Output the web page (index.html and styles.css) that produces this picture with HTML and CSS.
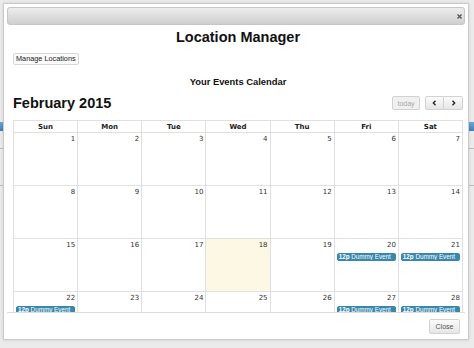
FILE: index.html
```html
<!DOCTYPE html>
<html lang="en">
<head>
  <meta charset="UTF-8" />
  <title>Location Manager</title>
  <link rel="stylesheet" href="styles.css">
</head>
<body>
  <!-- page behind the dialog -->
  <div class="page">
    <div class="page-bar"></div>
    <div class="page-line"></div>
    <div class="page-line second"></div>
  </div>

  <div class="dialog">
    <div class="titlebar">
      <span class="close-x">
        <svg width="5" height="5" viewBox="0 0 5 5"><path d="M0.5 0.5L4.5 4.5M4.5 0.5L0.5 4.5" stroke="#555" stroke-width="1.3"/></svg>
      </span>
    </div>

    <div class="dialog-content">
      <h1>Location Manager</h1>
      <button class="manage-btn">Manage Locations</button>
      <h2>Your Events Calendar</h2>

      <div class="cal-toolbar">
        <div class="cal-title">February 2015</div>
        <div class="cal-buttons">
          <button class="fc-btn today-btn">today</button>
          <div class="btn-group">
            <button class="fc-btn prev">
              <svg width="5" height="6" viewBox="0 0 5 6"><path d="M3.5 0.7L1.3 3L3.5 5.3" fill="none" stroke="#222" stroke-width="1.3"/></svg>
            </button>
            <button class="fc-btn next">
              <svg width="5" height="6" viewBox="0 0 5 6"><path d="M1.5 0.7L3.7 3L1.5 5.3" fill="none" stroke="#222" stroke-width="1.3"/></svg>
            </button>
          </div>
        </div>
      </div>

      <table class="calendar">
        <thead>
          <tr><th>Sun</th><th>Mon</th><th>Tue</th><th>Wed</th><th>Thu</th><th>Fri</th><th>Sat</th></tr>
        </thead>
        <tbody>
          <tr>
            <td><div class="day-num">1</div></td>
            <td><div class="day-num">2</div></td>
            <td><div class="day-num">3</div></td>
            <td><div class="day-num">4</div></td>
            <td><div class="day-num">5</div></td>
            <td><div class="day-num">6</div></td>
            <td><div class="day-num">7</div></td>
          </tr>
          <tr>
            <td><div class="day-num">8</div></td>
            <td><div class="day-num">9</div></td>
            <td><div class="day-num">10</div></td>
            <td><div class="day-num">11</div></td>
            <td><div class="day-num">12</div></td>
            <td><div class="day-num">13</div></td>
            <td><div class="day-num">14</div></td>
          </tr>
          <tr>
            <td><div class="day-num">15</div></td>
            <td><div class="day-num">16</div></td>
            <td><div class="day-num">17</div></td>
            <td class="today"><div class="day-num">18</div></td>
            <td><div class="day-num">19</div></td>
            <td><div class="day-num">20</div><div class="event"><b>12p</b> Dummy Event</div></td>
            <td><div class="day-num">21</div><div class="event"><b>12p</b> Dummy Event</div></td>
          </tr>
          <tr>
            <td><div class="day-num">22</div><div class="event"><b>12p</b> Dummy Event</div></td>
            <td><div class="day-num">23</div></td>
            <td><div class="day-num">24</div></td>
            <td><div class="day-num">25</div></td>
            <td><div class="day-num">26</div></td>
            <td><div class="day-num">27</div><div class="event"><b>12p</b> Dummy Event</div></td>
            <td><div class="day-num">28</div><div class="event"><b>12p</b> Dummy Event</div></td>
          </tr>
        </tbody>
      </table>
    </div>

    <div class="dialog-footer">
      <button class="fc-btn close-btn">Close</button>
    </div>
  </div>
</body>
</html>
```

FILE: styles.css
```css
body {
  margin: 0;
  width: 474px;
  height: 348px;
  overflow: hidden;
  position: relative;
  background: #ebebeb;
  font-family: "Liberation Sans", Arial, sans-serif;
  color: #111;
}

/* page under the overlay */
.page {
  padding-top: 122px;
}
.page-bar {
  height: 9px;
  background: linear-gradient(#6ea8da, #3d80bb);
}
.page-line {
  height: 1px;
  margin-top: 17px;
  background: #bdbdbd;
}
.page-line.second {
  margin-top: 36px;
}

.dialog {
  position: absolute;
  left: 3px;
  top: 3px;
  width: 458px;
  height: 332px;
  padding: 3px 3px 0;
  display: flex;
  flex-direction: column;
  background: #fff;
  border: 1px solid #cacaca;
  box-shadow: 0 0 3px rgba(0, 0, 0, 0.12);
}

.titlebar {
  height: 18px;
  box-sizing: border-box;
  display: flex;
  justify-content: flex-end;
  align-items: center;
  padding-right: 2px;
  border: 1px solid #c6c6c6;
  border-radius: 3px;
  background: linear-gradient(#ededed, #cfcfcf);
}
.close-x {
  display: flex;
  width: 5px;
  height: 5px;
}

.dialog-content {
  height: 287px;
  box-sizing: border-box;
  padding: 0 2px 0 6px;
  overflow: hidden;
}

h1 {
  margin: 4px 0 0;
  font-size: 14.5px;
  line-height: 17px;
  text-align: center;
}

.manage-btn {
  display: block;
  margin-top: 7px;
  height: 12px;
  padding: 0 2px;
  font-family: "Liberation Sans", Arial, sans-serif;
  font-size: 7.3px;
  line-height: 10px;
  color: #222;
  background: #fafafa;
  border: 1px solid #d8d8d8;
  border-radius: 2px;
}

h2 {
  margin: 11px 0 0;
  font-size: 9.4px;
  line-height: 11px;
  text-align: center;
}

.cal-toolbar {
  display: flex;
  justify-content: space-between;
  align-items: center;
  margin-top: 9px;
  height: 14px;
}
.cal-title {
  font-size: 14.5px;
  font-weight: bold;
  line-height: 14px;
}
.cal-buttons {
  display: flex;
  gap: 5px;
}
.btn-group {
  display: flex;
}

.fc-btn {
  height: 14px;
  box-sizing: border-box;
  padding: 0;
  display: flex;
  align-items: center;
  justify-content: center;
  font-family: "Liberation Sans", Arial, sans-serif;
  font-size: 7px;
  color: #555;
  background: linear-gradient(#fbfbfb, #e6e6e6);
  border: 1px solid #d2d2d2;
  border-radius: 2px;
}
.today-btn {
  width: 28px;
  color: #a8a8a8;
  background: #f0f0f0;
}
.btn-group .fc-btn {
  width: 19px;
}
.btn-group .prev {
  border-radius: 2px 0 0 2px;
}
.btn-group .next {
  border-left: none;
  border-radius: 0 2px 2px 0;
}

.calendar {
  margin-top: 10px;
  width: 100%;
  border-collapse: collapse;
  table-layout: fixed;
  font-family: "DejaVu Sans", Verdana, sans-serif;
}
.calendar th {
  height: 11px;
  padding: 0;
  border: 1px solid #e0e0e0;
  font-size: 7px;
  line-height: 10px;
  color: #222;
}
.calendar td {
  height: 52px;
  padding: 0;
  vertical-align: top;
  border: 1px solid #e0e0e0;
}
.calendar td.today {
  background: #fcf8e3;
}

.day-num {
  padding: 2px 2px 0 0;
  text-align: right;
  font-size: 7px;
  line-height: 9px;
  color: #333;
}

.event {
  margin: 3px 2px 0;
  height: 8px;
  box-sizing: border-box;
  padding-left: 1px;
  overflow: hidden;
  white-space: nowrap;
  font-family: "Liberation Sans", Arial, sans-serif;
  font-size: 6.3px;
  line-height: 6px;
  color: #fff;
  background: #3a87ad;
  border: 1px solid #3a87ad;
  border-radius: 2px;
}

.dialog-footer {
  height: 27px;
  box-sizing: border-box;
  display: flex;
  justify-content: flex-end;
  align-items: flex-start;
  padding: 6px 5px 0 0;
  border-top: 1px solid #dcdcdc;
}
.close-btn {
  width: 31px;
  height: 15px;
}
```
